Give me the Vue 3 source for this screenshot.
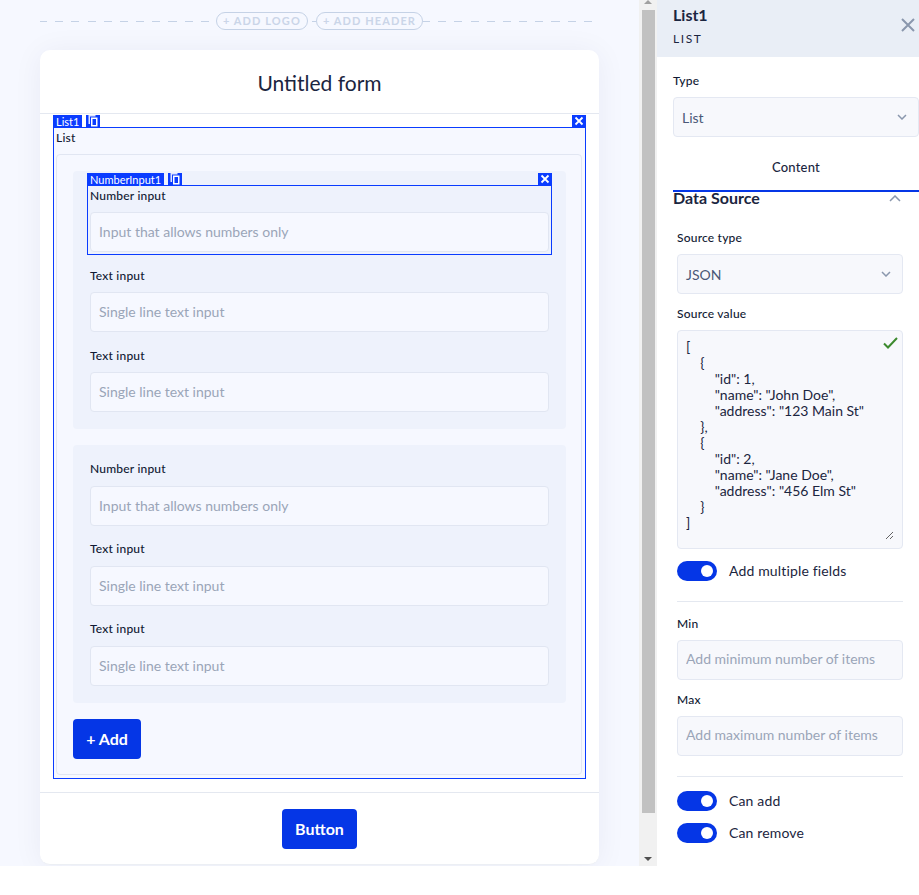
<template>
  <div class="page">
    <div class="canvas">
      <div class="top-row">
        <span class="dash"></span>
        <span class="pill">+ ADD LOGO</span>
        <span class="dash short"></span>
        <span class="pill">+ ADD HEADER</span>
        <span class="dash"></span>
      </div>

      <div class="card">
        <h1 class="title">Untitled form</h1>

        <div class="form-body">
          <div class="selected list-box">
            <span class="tag">List1</span>
            <span class="tag-copy">
              <svg width="10" height="12" viewBox="0 0 10 12"><path d="M1.250 9V.75H7.500" fill="none" stroke="#dfe6ff" stroke-width="1.500" /><rect x="3.750" y="3.250" width="5" height="7.500" fill="none" stroke="#fff" stroke-width="1.500" /></svg>
            </span>
            <span class="tag-close">
              <svg width="10" height="10" viewBox="0 0 10 10"><path d="M1.500 1.500l7 7M8.500 1.500l-7 7" stroke="#fff" stroke-width="1.800" /></svg>
            </span>

            <div class="field-label list-label">List</div>
            <div class="list-inner">
              <div v-for="(group, g) in groups" :key="g" class="group">
                <div
                  v-for="(field, i) in group"
                  :key="i"
                  :class="['field', field.selected ? 'selected number-box' : '']"
                >
                  <template v-if="field.selected">
                    <span class="tag">NumberInput1</span>
                    <span class="tag-copy">
                      <svg width="10" height="12" viewBox="0 0 10 12"><path d="M1.250 9V.75H7.500" fill="none" stroke="#dfe6ff" stroke-width="1.500" /><rect x="3.750" y="3.250" width="5" height="7.500" fill="none" stroke="#fff" stroke-width="1.500" /></svg>
                    </span>
                    <span class="tag-close">
                      <svg width="10" height="10" viewBox="0 0 10 10"><path d="M1.500 1.500l7 7M8.500 1.500l-7 7" stroke="#fff" stroke-width="1.800" /></svg>
                    </span>
                  </template>
                  <div class="field-label">{{ field.label }}</div>
                  <input class="form-input" type="text" :placeholder="field.placeholder" />
                </div>
              </div>
              <button class="btn add-btn">+ Add</button>
            </div>
          </div>
        </div>

        <div class="card-footer">
          <button class="btn">Button</button>
        </div>
      </div>
    </div>

    <div class="scrollbar">
      <span class="arrow up"></span>
      <span class="thumb"></span>
      <span class="arrow down"></span>
    </div>

    <div class="panel">
      <div class="panel-head">
        <div>
          <div class="panel-title">List1</div>
          <div class="panel-sub">LIST</div>
        </div>
        <svg class="panel-close" width="14" height="14" viewBox="0 0 14 14"><path d="M1 1l12 12M13 1L1 13" stroke="#8a97ad" stroke-width="2" /></svg>
      </div>

      <div class="panel-body">
        <div class="p-label type-label">Type</div>
        <div class="select">
          <span>List</span>
          <svg width="10" height="6" viewBox="0 0 10 6"><path d="M1 1l4 4 4-4" fill="none" stroke="#8a97ad" stroke-width="1.5" /></svg>
        </div>

        <div class="tab">Content</div>

        <div class="section-head">
          <span>Data Source</span>
          <svg width="12" height="7" viewBox="0 0 12 7"><path d="M1 6l5-5 5 5" fill="none" stroke="#8a97ad" stroke-width="1.5" /></svg>
        </div>

        <div class="section">
          <div class="p-label">Source type</div>
          <div class="select">
            <span>JSON</span>
            <svg width="10" height="6" viewBox="0 0 10 6"><path d="M1 1l4 4 4-4" fill="none" stroke="#8a97ad" stroke-width="1.5" /></svg>
          </div>

          <div class="p-label source-label">Source value</div>
          <div class="code-wrap">
            <textarea class="code" :value="sourceValue" spellcheck="false"></textarea>
            <svg class="check" width="15" height="12" viewBox="0 0 15 12"><path d="M1 6.500l4 4L14 1" fill="none" stroke="#3c8a2e" stroke-width="2" /></svg>
          </div>

          <div class="toggle-row multi">
            <span class="toggle"><i></i></span>
            <span class="toggle-text">Add multiple fields</span>
          </div>

          <hr class="divider" />

          <div class="p-label">Min</div>
          <input class="side-input" type="text" placeholder="Add minimum number of items" />
          <div class="p-label max-label">Max</div>
          <input class="side-input" type="text" placeholder="Add maximum number of items" />

          <hr class="divider" />

          <div class="toggle-row">
            <span class="toggle"><i></i></span>
            <span class="toggle-text">Can add</span>
          </div>
          <div class="toggle-row can-remove">
            <span class="toggle"><i></i></span>
            <span class="toggle-text">Can remove</span>
          </div>
        </div>
      </div>
    </div>
  </div>
</template>

<script setup>
const numberPh = 'Input that allows numbers only'
const textPh = 'Single line text input'

const groups = [
  [
    { label: 'Number input', placeholder: numberPh, selected: true },
    { label: 'Text input', placeholder: textPh },
    { label: 'Text input', placeholder: textPh },
  ],
  [
    { label: 'Number input', placeholder: numberPh },
    { label: 'Text input', placeholder: textPh },
    { label: 'Text input', placeholder: textPh },
  ],
]

const sourceValue = `[
    {
        "id": 1,
        "name": "John Doe",
        "address": "123 Main St"
    },
    {
        "id": 2,
        "name": "Jane Doe",
        "address": "456 Elm St"
    }
]`
</script>

<style>
body {
  background: #fff;
}
</style>

<style scoped>
.page {
  display: flex;
  width: 919px;
  height: 866px;
  overflow: hidden;
  font-family: Lato, sans-serif;
  color: #1b2540;
}

.canvas {
  width: 639px;
  flex: none;
  padding: 0 40px;
  box-sizing: border-box;
  background: #f6f8ff;
}

.top-row {
  display: flex;
  align-items: center;
  height: 42px;
}

.dash {
  flex: 1;
  height: 0;
  border-top: 1px dashed #c5d2e6;
  border-image: repeating-linear-gradient(90deg, #c5d2e6 0 8px, transparent 8px 16px) 1;
}

.dash.short {
  flex: none;
  width: 4px;
  margin-left: 4px;
  border-image: none;
  border-top: 1px solid #c5d2e6;
}

.pill {
  height: 16px;
  line-height: 16px;
  padding: 0 6px;
  border: 1px solid #c5d2e6;
  border-radius: 10px;
  font-size: 11px;
  font-weight: 700;
  letter-spacing: 1.1px;
  color: #cad5e8;
  white-space: nowrap;
}

.card {
  margin-top: 8px;
  background: #fff;
  border-radius: 10px;
  height: 815px;
  box-shadow: 0 2px 30px rgba(30, 40, 80, 0.06);
  border-bottom: 1px solid #eceff4;
  box-sizing: border-box;
}

.title {
  margin: 0;
  height: 63px;
  line-height: 65px;
  text-align: center;
  font-size: 21px;
  font-weight: 400;
  color: #1b2540;
  border-bottom: 1px solid #e4e8f0;
}

.form-body {
  padding: 13px;
}

.selected {
  position: relative;
  border: 1px solid #0a3cff;
}

.list-box {
  height: 652px;
  box-sizing: border-box;
  background: #f6f8ff;
  padding: 0 3px 0 2px;
}

.tag {
  position: absolute;
  left: -1px;
  top: -13px;
  height: 12px;
  line-height: 13px;
  padding: 0 3px;
  background: #0a3cff;
  color: #fff;
  font-size: 11px;
}

.tag-copy {
  position: absolute;
  top: -13px;
  left: 32px;
  width: 14px;
  height: 12px;
  background: #0a3cff;
  display: flex;
  align-items: center;
  justify-content: center;
}

.number-box .tag-copy {
  left: 80px;
}

.tag-close {
  position: absolute;
  top: -13px;
  right: -1px;
  width: 14px;
  height: 12px;
  background: #0a3cff;
  display: flex;
  align-items: center;
  justify-content: center;
}

.field-label {
  font-size: 12px;
  line-height: 16px;
  font-weight: 500;
  letter-spacing: 0.2px;
  color: #111a33;
}

.list-label {
  height: 26px;
  padding-top: 2px;
  box-sizing: border-box;
}

.list-inner {
  height: 621px;
  box-sizing: border-box;
  border: 1px solid #e1e6f2;
  border-radius: 4px;
  padding: 16px 15px 0 16px;
}

.group {
  background: #eef2fc;
  border-radius: 4px;
  padding: 17px 17px 17px;
  margin-bottom: 16px;
}

.group:first-child {
  padding-top: 14px;
}

.group:not(:first-child) .field-label {
  margin-top: -1px;
}

.group .field {
  height: 64px;
  margin-bottom: 16px;
  display: flex;
  flex-direction: column;
  justify-content: space-between;
}

.group .field:last-of-type {
  margin-bottom: 0;
}

.group .field.number-box {
  height: 70px;
  box-sizing: border-box;
  margin: 0 -3px 13px;
  padding: 2px;
}

.form-input {
  height: 40px;
  width: 100%;
  box-sizing: border-box;
  background: #f6f8ff;
  border: 1px solid #e1e6f2;
  border-radius: 4px;
  padding: 0 8px 2px;
  font-family: Lato, sans-serif;
  font-size: 14px;
  outline: none;
}

.form-input::placeholder,
.side-input::placeholder {
  color: #9aa5b8;
  opacity: 1;
}

.btn {
  display: block;
  height: 40px;
  border: 0;
  border-radius: 4px;
  padding: 0 13px 2px;
  background: #0536e6;
  color: #fff;
  font-family: Lato, sans-serif;
  font-size: 16px;
  font-weight: 700;
}

.add-btn {
  width: 68px;
  padding: 0 0 2px;
}

.card-footer {
  display: flex;
  justify-content: center;
  border-top: 1px solid #e4e8f0;
  padding-top: 16px;
}

.scrollbar {
  width: 18px;
  flex: none;
  background: #f1f1f1;
  display: flex;
  flex-direction: column;
  align-items: center;
}

.thumb {
  flex: none;
  width: 13px;
  height: 803px;
  background: #c1c1c1;
}

.arrow {
  flex: none;
  width: 0;
  height: 0;
  border-left: 4px solid transparent;
  border-right: 4px solid transparent;
}

.arrow.up {
  margin-bottom: 6px;
  border-bottom: 4px solid #a0a0a0;
}

.arrow.down {
  margin-top: 44px;
  border-top: 4px solid #505050;
}

.panel {
  width: 262px;
  flex: none;
  background: #fff;
  overflow: hidden;
}

.panel-head {
  height: 57px;
  box-sizing: border-box;
  background: #e9eef6;
  padding: 5px 4px 0 16px;
  display: flex;
  justify-content: space-between;
  align-items: flex-start;
}

.panel-title {
  font-size: 16px;
  line-height: 20px;
  font-weight: 700;
}

.panel-sub {
  margin-top: 7px;
  font-size: 12px;
  line-height: 14px;
  letter-spacing: 1.6px;
}

.panel-close {
  margin-top: 13px;
}

.panel-body {
  padding-left: 16px;
}

.p-label {
  font-size: 12px;
  line-height: 16px;
  font-weight: 500;
  letter-spacing: 0.2px;
  color: #111a33;
  margin-bottom: 8px;
}

.type-label {
  margin-top: 16px;
}

.select {
  height: 40px;
  box-sizing: border-box;
  background: #f7f8fc;
  border: 1px solid #e4e8f2;
  border-radius: 4px;
  padding: 0 11px 0 8px;
  display: flex;
  align-items: center;
  justify-content: space-between;
  font-size: 14px;
  color: #4a5878;
}

.tab {
  height: 55px;
  box-sizing: border-box;
  border-bottom: 2px solid #0536e6;
  text-align: center;
  font-size: 13px;
  font-weight: 500;
  letter-spacing: 0.2px;
  line-height: 60px;
}

.section-head {
  height: 16px;
  display: flex;
  justify-content: space-between;
  align-items: center;
  padding-right: 18px;
  font-size: 16px;
  font-weight: 700;
  margin: -2px 0 24px;
  line-height: 16px;
}

.section {
  padding: 0 16px 0 4px;
}

.source-label {
  margin-top: 12px;
}

.code-wrap {
  position: relative;
  height: 219px;
  box-sizing: border-box;
  background: #f7f8fc;
  border: 1px solid #e4e8f2;
  border-radius: 4px;
  padding: 8px;
}

.code {
  display: block;
  width: 100%;
  height: 201px;
  box-sizing: border-box;
  background: transparent;
  border: 0;
  padding: 0;
  font-family: Lato, sans-serif;
  font-size: 14px;
  line-height: 16px;
  color: #1b2540;
  outline: none;
  white-space: pre;
  overflow: hidden;
}

.check {
  position: absolute;
  top: 6px;
  right: 4px;
}

.toggle-row {
  display: flex;
  align-items: center;
  gap: 12px;
  height: 20px;
  font-size: 14px;
}

.toggle-text {
  padding-bottom: 2px;
  letter-spacing: 0.15px;
}

.toggle-row.multi {
  margin-top: 12px;
}

.can-remove {
  margin-top: 12px;
}

.toggle {
  width: 40px;
  height: 20px;
  border-radius: 10px;
  background: #0536e6;
  display: flex;
  align-items: center;
  justify-content: flex-end;
  padding-right: 4px;
  box-sizing: border-box;
}

.toggle i {
  width: 12px;
  height: 12px;
  border-radius: 50%;
  background: #fff;
}

.divider {
  border: 0;
  border-top: 1px solid #e4e8f0;
  margin: 20px 0 14px;
}

.max-label {
  margin-top: 12px;
}

.side-input {
  display: block;
  width: 100%;
  height: 40px;
  box-sizing: border-box;
  background: #f7f8fc;
  border: 1px solid #e4e8f2;
  border-radius: 4px;
  padding: 0 8px 3px;
  font-family: Lato, sans-serif;
  font-size: 14px;
  outline: none;
}
</style>
